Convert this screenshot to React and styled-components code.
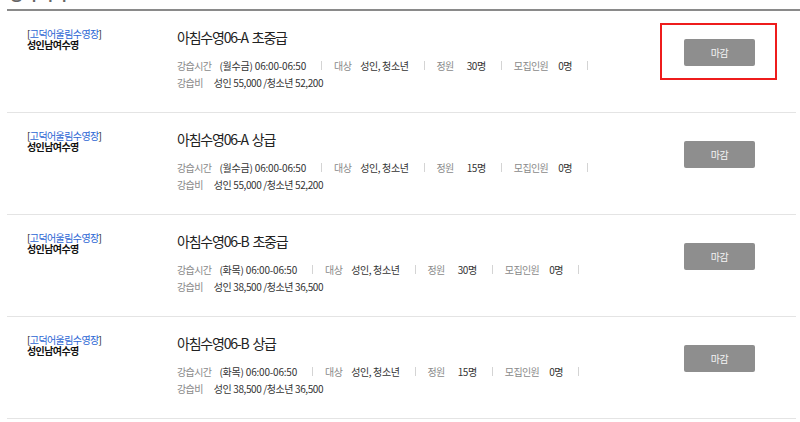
import React from "react";
import styled, { createGlobalStyle } from "styled-components";

const GlobalStyle = createGlobalStyle`
    html, body {
        margin: 0;
        padding: 0;
        background: #fff;
    }
    body {
        font-family: "Noto Sans CJK KR", "Noto Sans", sans-serif;
        color: #333;
        overflow: hidden;
    }
`;

const Page = styled.div`
    width: 800px;
    height: 422px;
    padding-left: 7px;
    box-sizing: border-box;
    overflow: hidden;
`;

// only the very bottom of the section heading is inside the view
const Heading = styled.div`
    height: 9px;
    overflow: hidden;
    font-size: 16px;
    font-weight: 700;
    color: #666;
    line-height: 20px;

    span {
        display: block;
        margin-top: -17px;
        padding-left: 2px;
        letter-spacing: -1px;
    }
`;

const List = styled.ul`
    list-style: none;
    margin: 0;
    padding: 0;
    border-top: 2px solid #8a8a8a;
`;

const Row = styled.li`
    display: flex;
    align-items: flex-start;
    height: 102px;
    box-sizing: border-box;
    margin-right: 4px;
    border-bottom: 1px solid #e4e4e4;
`;

const Place = styled.div`
    width: 150px;
    flex-shrink: 0;
    padding: 17px 0 0 20px;
    font-size: 10px;
    line-height: 11px;
    letter-spacing: -0.6px;
`;

const PlaceName = styled.div`
    color: #222;
    em {
        font-style: normal;
        color: #2c66d4;
    }
`;

const Program = styled.div`
    font-weight: 700;
    color: #111;
`;

const Body = styled.div`
    flex: 1;
    padding-top: 16px;
`;

const Title = styled.h3`
    margin: 0;
    font-size: 14px;
    line-height: 20px;
    font-weight: 400;
    color: #222;
    letter-spacing: -1.2px;
    white-space: pre;
`;

const InfoLine = styled.div`
    display: flex;
    align-items: center;
    font-size: 10px;
    line-height: 17px;
    letter-spacing: -0.6px;
    margin-top: ${(p) => (p.$first ? "10px" : "0")};
    white-space: nowrap;
`;

const Label = styled.span`
    color: #8a8a8a;
    margin-right: ${(p) => (p.$gap ? p.$gap : "8px")};
`;

const Value = styled.span`
    color: #333;
    letter-spacing: ${(p) => (p.$wide ? "-0.2px" : "-0.4px")};
`;

const Divider = styled.span`
    width: 1px;
    height: 9px;
    background: #d4d4d4;
    margin: 0 12px 0 15px;
`;

const Action = styled.div`
    margin: 12px 19px 0 auto;
    padding: 14px 20px 12px 22px;
    border: 2px solid ${(p) => (p.$marked ? "#ee1c1c" : "transparent")};
`;

const CloseButton = styled.button`
    display: block;
    width: 71px;
    height: 27px;
    border: 0;
    border-radius: 2px;
    background: #8e8e8e;
    color: #f4f4f4;
    font-family: "Noto Sans CJK KR", sans-serif;
    font-size: 10px;
    letter-spacing: -0.4px;
    padding: 0;
    cursor: default;
`;

const courses = [
    {
        title: "아침수영06-A  초중급",
        days: "(월수금)",
        cap: "30명",
        fee: "성인 55,000 /청소년 52,200",
        marked: true,
    },
    {
        title: "아침수영06-A  상급",
        days: "(월수금)",
        cap: "15명",
        fee: "성인 55,000 /청소년 52,200",
    },
    {
        title: "아침수영06-B  초중급",
        days: "(화목)",
        cap: "30명",
        fee: "성인 38,500 /청소년 36,500",
    },
    {
        title: "아침수영06-B  상급",
        days: "(화목)",
        cap: "15명",
        fee: "성인 38,500 /청소년 36,500",
    },
];

function CourseRow({ course }) {
    return (
        <Row>
            <Place>
                <PlaceName>
                    [<em>고덕어울림수영장</em>]
                </PlaceName>
                <Program>성인남여수영</Program>
            </Place>
            <Body>
                <Title>{course.title}</Title>
                <InfoLine $first>
                    <Label>강습시간</Label>
                    <Value $wide>{course.days} 06:00-06:50</Value>
                    <Divider />
                    <Label $gap="9px">대상</Label>
                    <Value>성인, 청소년</Value>
                    <Divider />
                    <Label $gap="13px">정원</Label>
                    <Value>{course.cap}</Value>
                    <Divider />
                    <Label $gap="10px">모집인원</Label>
                    <Value>0명</Value>
                    <Divider />
                </InfoLine>
                <InfoLine>
                    <Label $gap="11px">강습비</Label>
                    <Value>{course.fee}</Value>
                </InfoLine>
            </Body>
            <Action $marked={course.marked}>
                <CloseButton>마감</CloseButton>
            </Action>
        </Row>
    );
}

export default function App() {
    return (
        <>
            <GlobalStyle />
            <Page>
                <Heading>
                    <span>강좌 목록</span>
                </Heading>
                <List>
                    {courses.map((c, i) => (
                        <CourseRow key={i} course={c} />
                    ))}
                </List>
            </Page>
        </>
    );
}
